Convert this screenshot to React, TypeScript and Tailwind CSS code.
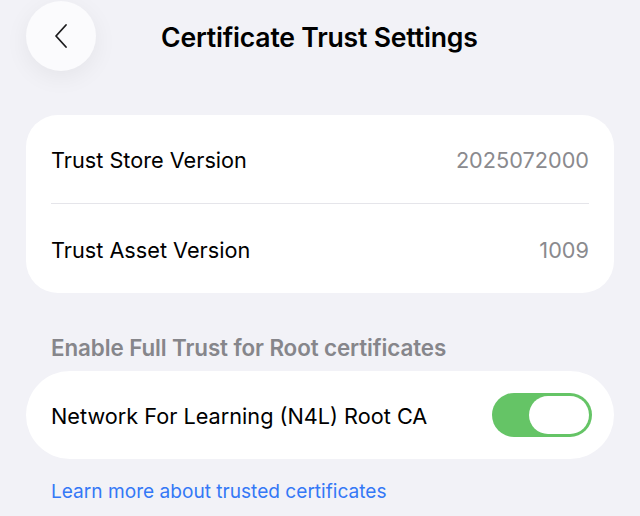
import React from 'react';

function Toggle() {
  return (
    <div className="w-[100px] h-[44px] rounded-full bg-[#65c466] flex items-center justify-end p-[3px]">
      <div className="w-[60px] h-[38px] rounded-full bg-white" />
    </div>
  );
}

export default function App() {
  return (
    <div
      className="w-[640px] h-[516px] bg-[#f2f2f7] overflow-hidden text-black"
      style={{ fontFamily: 'Inter, "Noto Sans", sans-serif' }}
    >
      {/* Header */}
      <div className="flex items-center h-[72px] pl-[26px]">
        <button className="w-[70px] h-[70px] rounded-full bg-[#fbfbfd] shadow-[0_6px_24px_rgba(0,0,0,0.06)] flex items-center justify-center">
          <svg width="16" height="26" viewBox="0 0 16 26" fill="none" stroke="#1c1c1e" strokeWidth="1.8" strokeLinecap="round" strokeLinejoin="round">
            <path d="M13 2L3 13l10 11" />
          </svg>
        </button>
        <h1 className="ml-[65px] pt-[4px] text-[26.6px] font-semibold tracking-[-0.2px]">Certificate Trust Settings</h1>
      </div>

      {/* Versions */}
      <div className="mx-[26px] mt-[43px] bg-white rounded-[32px] px-[25px]">
        <div className="flex items-center justify-between h-[89px] pt-[3px] border-b border-[#e5e5ea]">
          <span className="text-[21.7px]">Trust Store Version</span>
          <span className="text-[21.7px] text-[#8a8a8e]">2025072000</span>
        </div>
        <div className="flex items-center justify-between h-[89px] pt-[3px]">
          <span className="text-[21.7px]">Trust Asset Version</span>
          <span className="text-[21.7px] text-[#8a8a8e]">1009</span>
        </div>
      </div>

      {/* Section header */}
      <div className="px-[51px] mt-[42px] text-[22.4px] font-semibold text-[#86868b] leading-[26px] tracking-[-0.1px]">
        Enable Full Trust for Root certificates
      </div>

      {/* Root CA */}
      <div className="mx-[26px] mt-[10px] bg-white rounded-full pl-[25px] pr-[22px] h-[88px] flex items-center justify-between">
        <span className="text-[21.7px] pt-[2px]">Network For Learning (N4L) Root CA</span>
        <Toggle />
      </div>

      <div className="px-[51px] mt-[18px] text-[19.1px] text-[#3478f6]">
        Learn more about trusted certificates
      </div>
    </div>
  );
}
